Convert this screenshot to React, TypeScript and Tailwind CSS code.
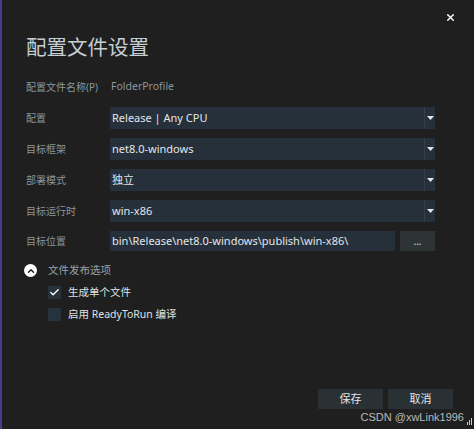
import { Check, ChevronUp, X } from "lucide-react";

const font = "font-['Noto_Sans','Noto_Sans_CJK_SC',sans-serif]";

function Select({ value }: { value: string }) {
  return (
    <div className="flex h-[22px] w-[325px] items-center bg-[#26303a]">
      <span className="flex-1 pl-[2px] text-[11px] text-[#e3e6e8]">{value}</span>
      <div className="flex h-full w-[11px] items-center justify-center border-l border-[#33404a]">
        <svg width="7" height="4" viewBox="0 0 7 4">
          <path d="M0 0h7L3.5 4z" fill="#e6e6e6" />
        </svg>
      </div>
    </div>
  );
}

function Row({ label, children }: { label: string; children: React.ReactNode }) {
  return (
    <div className="flex items-center">
      <span className="w-[84px] text-[10px] text-[#8c959b]">{label}</span>
      {children}
    </div>
  );
}

function CheckRow({ label, checked }: { label: string; checked?: boolean }) {
  return (
    <div className="flex items-center gap-[7px]">
      <div className="flex h-[13px] w-[13px] items-center justify-center bg-[#26333d]">
        {checked && <Check size={11} strokeWidth={3} className="text-white" />}
      </div>
      <span className="text-[10.5px] text-[#dfe2e4]">{label}</span>
    </div>
  );
}

export default function App() {
  return (
    <div className={`flex h-[429px] w-[474px] flex-col border-l-2 border-[#4a3c8c] bg-[#1f1f1f] ${font}`}>
      <div className="flex justify-end pr-[18px] pt-[12px]">
        <X size={11} strokeWidth={3} className="text-white" />
      </div>

      <h1 className="ml-[24px] mt-[11px] text-[20.5px] leading-[26px] text-[#c5ced3]">配置文件设置</h1>

      <div className="ml-[24px] mt-[20px] flex flex-col">
        <div className="flex h-[14px] items-center">
          <span className="w-[85px] text-[10px] text-[#8c959b]">配置文件名称(P)</span>
          <span className="text-[10.5px] text-[#8c959b]">FolderProfile</span>
        </div>

        <div className="mt-[13px] flex flex-col gap-[9px]">
          <Row label="配置">
            <Select value="Release | Any CPU" />
          </Row>
          <Row label="目标框架">
            <Select value="net8.0-windows" />
          </Row>
          <Row label="部署模式">
            <Select value="独立" />
          </Row>
          <Row label="目标运行时">
            <Select value="win-x86" />
          </Row>
          <Row label="目标位置">
            <div className="flex h-[20px] w-[285px] items-center bg-[#26303a] pl-[2px] text-[11px] text-[#e3e6e8]">
              bin\Release\net8.0-windows\publish\win-x86\
            </div>
            <div className="ml-[5px] flex h-[20px] w-[35px] items-center justify-center bg-[#2e3336] text-[10px] leading-none text-[#dfe2e4]">
              ...
            </div>
          </Row>
        </div>

        <div className="-ml-[2px] mt-[12px] flex items-center gap-[11px]">
          <div className="flex h-[13px] w-[13px] items-center justify-center rounded-full bg-white">
            <ChevronUp size={10} strokeWidth={3.5} className="text-[#1f1f1f]" />
          </div>
          <span className="text-[10.5px] text-[#9aa3a8]">文件发布选项</span>
        </div>

        <div className="ml-[22px] mt-[6px] flex flex-col gap-[6px]">
          <CheckRow label="生成单个文件" checked />
          <CheckRow label="启用 ReadyToRun 编译" />
        </div>
      </div>

      <div className="mt-auto flex justify-end gap-[5px] pr-[21px]">
        <div className="flex h-[20px] w-[65px] items-center justify-center bg-[#2a3134] text-[11px] text-[#e3e6e8]">保存</div>
        <div className="flex h-[20px] w-[65px] items-center justify-center bg-[#2a3134] text-[11px] text-[#e3e6e8]">取消</div>
      </div>
      <div className="mb-[4px] mt-[1px] flex items-end justify-end pr-[1px]">
        <span className="mr-[3px] font-['Liberation_Sans',sans-serif] text-[11px] leading-[15px] text-[#b9b9b9]">CSDN @xwLink1996</span>
        <svg width="6" height="8" viewBox="0 0 6 8">
          <rect x="0" y="5" width="1" height="3" fill="#ccc" />
          <rect x="2" y="3" width="1" height="5" fill="#ccc" />
          <rect x="4" y="1" width="1" height="7" fill="#ccc" />
        </svg>
      </div>
    </div>
  );
}
